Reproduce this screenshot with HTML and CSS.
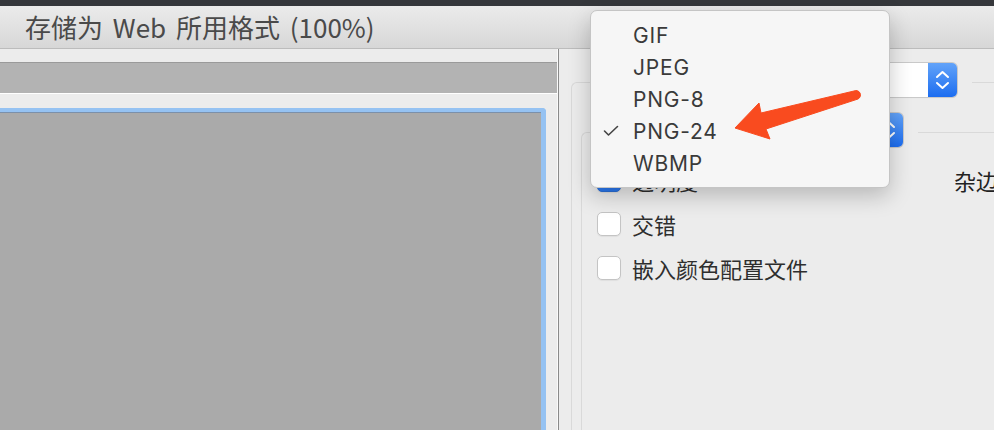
FILE: index.html
```html
<!DOCTYPE html>
<html lang="zh-CN">
<head>
    <meta charset="UTF-8">
    <title>存储为 Web 所用格式</title>
    <link rel="stylesheet" href="styles.css">
</head>
<body>
    <div class="topbar"></div>
    <header class="titlebar">存储为 Web 所用格式 (100%)</header>

    <div class="main">
        <!-- Preview side -->
        <section class="preview">
            <div class="tabs"></div>
            <div class="canvas">
                <div class="image"></div>
            </div>
        </section>

        <!-- Settings side -->
        <section class="settings">
            <div class="group outer">
                <div class="legend">
                    <div class="popup-wrap">
                        <div class="popup wide">
                            <span class="field"></span>
                            <span class="stepper">
                                <svg width="29" height="34" viewBox="0 0 29 34"><path d="M9 14 L14.5 9 L20 14 M9 20 L14.5 25 L20 20" fill="none" stroke="#fff" stroke-width="2" stroke-linecap="round" stroke-linejoin="round"/></svg>
                            </span>
                        </div>
                    </div>
                </div>

                <div class="group inner">
                    <div class="legend narrow">
                        <div class="popup-wrap">
                            <div class="popup">
                                <span class="field"></span>
                                <span class="stepper">
                                    <svg width="29" height="34" viewBox="0 0 29 34"><path d="M9 14 L14.5 9 L20 14 M9 20 L14.5 25 L20 20" fill="none" stroke="#fff" stroke-width="2" stroke-linecap="round" stroke-linejoin="round"/></svg>
                                </span>
                            </div>
                        </div>
                    </div>

                    <div class="options">
                        <div class="option-row">
                            <label class="option first"><span class="box checked"></span>透明度</label>
                            <span class="side-label">杂边：</span>
                        </div>
                        <div class="option-row">
                            <label class="option"><span class="box"></span>交错</label>
                        </div>
                        <div class="option-row">
                            <label class="option"><span class="box"></span>嵌入颜色配置文件</label>
                        </div>
                    </div>
                </div>
            </div>
        </section>
    </div>

    <!-- Format menu -->
    <ul class="menu">
        <li class="menu-item"><span class="mark"></span>GIF</li>
        <li class="menu-item"><span class="mark"></span>JPEG</li>
        <li class="menu-item"><span class="mark"></span>PNG-8</li>
        <li class="menu-item"><span class="mark"><svg width="16" height="12" viewBox="0 0 16 12"><path d="M1.5 6 L5.5 10 L14.5 1.5" fill="none" stroke="#444" stroke-width="1.6" stroke-linecap="round" stroke-linejoin="round"/></svg></span>PNG-24</li>
        <li class="menu-item"><span class="mark"></span>WBMP</li>
    </ul>

    <svg class="arrow" width="135" height="60" viewBox="0 0 135 60">
        <path d="M5 43 L29 18 L31 28 L124 6 A4 4 0 0 1 128 14 L36 44 L40 54 Z" fill="#f94b1f" stroke="#f94b1f" stroke-width="1" stroke-linejoin="round"/>
    </svg>
</body>
</html>
```

FILE: styles.css
```css
/* Global */
:root {
    --panel-bg: #ececec;
    --text-color: #2e2e2e;
    --blue-top: #62a3f9;
    --blue-bottom: #1c6df0;
    --group-line: #d9d9d9;
}

body {
    margin: 0;
    width: 994px;
    height: 430px;
    overflow: hidden;
    position: relative;
    background-color: var(--panel-bg);
    font-family: Inter, "Noto Sans CJK SC", sans-serif;
    color: var(--text-color);
}

.topbar {
    height: 6px;
    background-color: #35373b;
}

.titlebar {
    height: 42px;
    line-height: 42px;
    padding-left: 25px;
    font-family: "Noto Sans CJK SC", sans-serif;
    font-size: 26px;
    word-spacing: 4px;
    color: #4a4a4a;
    background: linear-gradient(#ebebeb, #d7d7d7);
    border-bottom: 1px solid #bcbcbc;
}

.main {
    display: flex;
    height: 381px;
}

/* Preview */
.preview {
    width: 557px;
    padding-top: 13px;
    border-right: 1px solid #fafafa;
    box-shadow: 1px 0 0 #8a8a8a;
    flex-shrink: 0;
    display: flex;
    flex-direction: column;
}

.tabs {
    height: 30px;
    background-color: #b3b3b3;
    border-top: 1px solid #9a9a9a;
    border-bottom: 1px solid #ffffff;
}

.canvas {
    flex: 1;
    display: flex;
    padding: 14px 11px 0 0;
}

.image {
    flex: 1;
    background-color: #aaaaaa;
    border-top: 4px solid #95c2f2;
    border-right: 5px solid #95c2f2;
    border-top-right-radius: 4px;
    box-shadow: inset 0 1px 0 #7b90aa;
}

/* Settings */
.settings {
    flex: 1;
    min-width: 0;
    padding: 33px 0 0 13px;
    display: flex;
    flex-direction: column;
}

.group {
    flex: 1;
    display: flex;
    flex-direction: column;
    border-top: 1px solid var(--group-line);
    border-left: 1px solid var(--group-line);
    border-top-left-radius: 6px;
}

.group.outer {
    padding-left: 9px;
}

.group.inner {
    margin-top: 35px;
}

.legend {
    display: flex;
    justify-content: flex-end;
    margin-top: -20px;
    padding-right: 22px;
}

.legend.narrow {
    padding-right: 76px;
}

.popup-wrap {
    padding: 0 15px;
    background-color: var(--panel-bg);
}

.popup {
    display: flex;
    height: 34px;
    width: 200px;
    border-radius: 5px;
    box-shadow: 0 0 0 1px #c9c9c9, 0 1px 1px rgba(0, 0, 0, 0.1);
}

.popup.wide {
    width: 330px;
}

.field {
    flex: 1;
    background-color: #ffffff;
    border-radius: 5px 0 0 5px;
}

.stepper {
    width: 29px;
    background: linear-gradient(var(--blue-top), var(--blue-bottom));
    border-radius: 0 5px 5px 0;
}

.stepper svg {
    display: block;
}

.options {
    padding: 21px 0 0 15px;
    display: flex;
    flex-direction: column;
    gap: 20px;
}

.option-row {
    display: flex;
    align-items: center;
    height: 24px;
}

.option {
    display: flex;
    align-items: center;
    gap: 11px;
    flex-shrink: 0;
    font-family: "Noto Sans CJK SC", sans-serif;
    font-size: 22px;
    color: var(--text-color);
}

.option.first {
    width: 357px;
}

.box {
    width: 22px;
    height: 22px;
    border: 1px solid #c4c4c4;
    border-radius: 5px;
    background-color: #ffffff;
    box-shadow: 0 1px 1px rgba(0, 0, 0, 0.06);
}

.box.checked {
    background-color: #2a78f0;
    border-color: #2a6fd8;
}

.side-label {
    font-family: "Noto Sans CJK SC", sans-serif;
    font-size: 22px;
    color: #222;
    white-space: nowrap;
    flex-shrink: 0;
}

/* Popup menu */
.menu {
    position: absolute;
    left: 590px;
    top: 10px;
    width: 298px;
    height: 160px;
    margin: 0;
    padding: 8px 0;
    list-style: none;
    background-color: #f6f6f6;
    border: 1px solid #c5c5c5;
    border-radius: 7px;
    box-shadow: 0 8px 22px rgba(0, 0, 0, 0.22);
}

.menu-item {
    display: flex;
    align-items: center;
    height: 32px;
    font-size: 21px;
    color: #3a3a3a;
    letter-spacing: 0.8px;
}

.mark {
    width: 42px;
    display: flex;
    align-items: center;
    padding-left: 12px;
    box-sizing: border-box;
}

.mark svg {
    display: block;
}

.arrow {
    position: absolute;
    left: 730px;
    top: 85px;
}
```
